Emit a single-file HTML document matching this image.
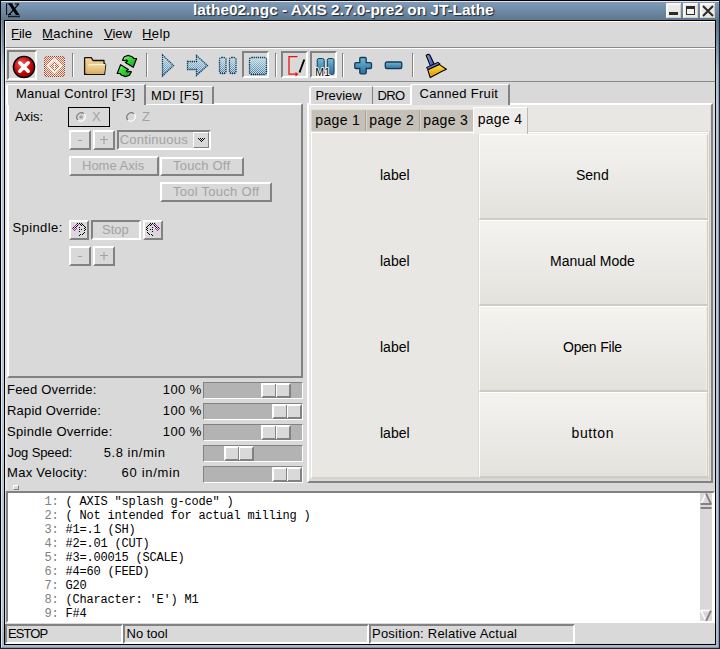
<!DOCTYPE html>
<html><head><meta charset="utf-8">
<style>
*{box-sizing:border-box;margin:0;padding:0}
html,body{width:720px;height:649px;overflow:hidden;background:#000}
body{position:relative;font-family:"Liberation Sans",sans-serif;font-size:13px;color:#000}
.a{position:absolute}
.t{position:absolute;white-space:pre;line-height:1}
.r2{border:2px solid;border-color:#fff #828282 #828282 #fff;background:#d9d9d9}
.s2{border:2px solid;border-color:#828282 #fff #fff #828282;background:#d9d9d9}
.s1{border:1px solid;border-color:#828282 #fff #fff #828282}
.dis{color:#a3a3a3}
.u{text-decoration:underline}
.gt{font-size:14px;color:#000}
.gbtn{background:linear-gradient(#f4f3f0,#e4e2dd);border-left:1px solid #fff;border-top:1px solid #fff;border-right:1px solid #cfcbc1;border-bottom:2px solid #cfccc4;box-shadow:-1px 0 0 #dddbd5,inset -1px 0 0 #f0efec}
.sep{width:2px;border-left:1px solid #828282;border-right:1px solid #fff;border-top:1px solid #828282}
.trough{border:1px solid;border-color:#828282 #fff #fff #828282;background:#b3b3b3;width:100px;height:17px}
.slider{width:30px;height:15px;top:0px;border:2px solid;border-color:#fff #828282 #828282 #fff;background:#d9d9d9}
.slider i{position:absolute;left:12px;top:-1px;width:2px;height:13px;border-left:1px solid #828282;border-right:1px solid #fff}
</style></head><body>
<!-- window frame -->
<div class="a" style="left:1px;top:1px;width:718px;height:647px;background:linear-gradient(#809cb8 0px,#5f7891 19px,#7890a8 40px,#aebfd0 70px,#b8c8d8 100px,#b8c8d8 600px,#aab9c9 647px);border-top:1px solid #dde8f4"></div>
<div class="a" style="left:1px;top:20px;width:1px;height:628px;background:linear-gradient(rgba(220,232,245,0.3),rgba(220,232,245,1) 80px)"></div>
<div class="a" style="left:718px;top:20px;width:1px;height:628px;background:rgba(60,80,100,0.35)"></div>
<div class="a" style="left:0px;top:647px;width:720px;height:1px;background:rgba(60,80,100,0.35)"></div>
<div class="a" style="left:2px;top:2px;width:717px;height:18px;background:linear-gradient(#7f9bb7,#5f7891)"></div>
<div class="a" style="left:4px;top:20px;width:712px;height:625px;background:#000"></div>
<div class="a" style="left:0;top:648px;width:720px;height:1px;background:#1a2530"></div>
<div class="a" style="left:719px;top:0;width:1px;height:649px;background:#1a2530"></div>
<!-- X logo -->
<svg class="a" style="left:0;top:0" width="24" height="20" viewBox="0 0 24 20">
 <rect x="6" y="3.3" width="1.1" height="11.6" fill="#111"/>
 <path d="M8.2 3.6L11.9 3.6L19.6 14.9L15.9 14.9Z" fill="#000"/>
 <path d="M18.6 4.1L9.2 14.6" stroke="#000" stroke-width="1.3"/>
 <rect x="14.8" y="3.4" width="4.4" height="1.1" fill="#000"/>
 <rect x="7.6" y="3.4" width="5" height="1" fill="#000"/>
 <rect x="7.8" y="14" width="3.4" height="1" fill="#000"/>
 <rect x="8" y="15.8" width="11.6" height="1.4" fill="#1a1a1a"/>
 <rect x="8" y="15.3" width="0.8" height="2.2" fill="#1a1a1a"/><rect x="18.8" y="15.3" width="0.8" height="2.2" fill="#1a1a1a"/>
</svg>
<!-- title -->
<div class="t" style="left:193px;top:3px;font-weight:bold;font-size:14px;color:#fff;text-shadow:1px 1px 1px #1b2631;transform:scaleX(1.1);transform-origin:0 0">lathe02.ngc - AXIS 2.7.0-pre2 on JT-Lathe</div>
<!-- title buttons -->
<div class="a" style="left:666px;top:3px;width:15px;height:15px;background:#ebe9e5;border:solid;border-width:2px 1px 1px 2px;border-color:#fbf8f2 #d6cebf #d6cebf #fbf8f2"><div class="a" style="left:1px;top:7px;width:9px;height:3px;background:#2b2b2b"></div></div>
<div class="a" style="left:683px;top:3px;width:15px;height:15px;background:#ebe9e5;border:solid;border-width:2px 1px 1px 2px;border-color:#fbf8f2 #d6cebf #d6cebf #fbf8f2"><div class="a" style="left:1px;top:1px;width:9px;height:9px;border:1px solid #2b2b2b;border-top-width:3px;background:#f4f2ee"></div></div>
<div class="a" style="left:700px;top:3px;width:15px;height:15px;background:#ebe9e5;border:solid;border-width:2px 1px 1px 2px;border-color:#fbf8f2 #d6cebf #d6cebf #fbf8f2"><svg class="a" style="left:0px;top:0px" width="12" height="12"><path d="M1 1L11 11M11 1L1 11" stroke="#2b2b2b" stroke-width="2"/></svg></div>
<!-- content -->
<div class="a" style="left:5px;top:21px;width:710px;height:623px;background:#d9d9d9"></div>
<!-- menubar -->
<div class="a" style="left:5px;top:21px;width:710px;height:27px;border-top:1px solid #fff;border-bottom:1px solid #8a8a8a;border-left:1px solid #fff"></div>
<div class="t" style="left:11px;top:27px">File</div><div class="a" style="left:12px;top:39px;width:8px;height:1px;background:#000"></div>
<div class="t" style="left:42px;top:27px;letter-spacing:0.3px">Machine</div><div class="a" style="left:43px;top:39px;width:11px;height:1px;background:#000"></div>
<div class="t" style="left:104px;top:27px">View</div><div class="a" style="left:104px;top:39px;width:9px;height:1px;background:#000"></div>
<div class="t" style="left:142px;top:27px;letter-spacing:0.4px">Help</div><div class="a" style="left:143px;top:39px;width:10px;height:1px;background:#000"></div>
<!-- toolbar -->
<div class="a" style="left:5px;top:48px;width:710px;height:34px;border-top:1px solid #fff;border-bottom:1px solid #8a8a8a;border-left:1px solid #fff"></div>
<div class="a s2" style="left:7px;top:50px;width:30px;height:30px"></div>
<svg class="a" style="left:0;top:0;width:0;height:0">
 <defs>
  <pattern id="chk" width="2" height="2" patternUnits="userSpaceOnUse"><rect x="1" y="0" width="1" height="1" fill="#d9d9d9"/><rect x="0" y="1" width="1" height="1" fill="#d9d9d9"/></pattern>
  <pattern id="chkw" width="2" height="2" patternUnits="userSpaceOnUse"><rect x="1" y="0" width="1" height="1" fill="#f4ecea"/><rect x="0" y="1" width="1" height="1" fill="#f4ecea"/></pattern>
  <linearGradient id="bg1" x1="0" y1="0" x2="0" y2="1"><stop offset="0" stop-color="#b6e4f2"/><stop offset="1" stop-color="#2f76a8"/></linearGradient>
  <linearGradient id="bg2" x1="0" y1="0" x2="0" y2="1"><stop offset="0" stop-color="#74b8d8"/><stop offset="1" stop-color="#2f6f98"/></linearGradient>
  <linearGradient id="gg2" x1="1" y1="1" x2="0" y2="0"><stop offset="0" stop-color="#c8ffc8"/><stop offset="0.35" stop-color="#3ee03e"/><stop offset="1" stop-color="#10a010"/></linearGradient>
  <linearGradient id="gg" x1="0" y1="0" x2="1" y2="1"><stop offset="0" stop-color="#c8ffc8"/><stop offset="0.35" stop-color="#3ee03e"/><stop offset="1" stop-color="#10a010"/></linearGradient>
  <linearGradient id="yg" x1="0" y1="0" x2="0" y2="1"><stop offset="0" stop-color="#ffe040"/><stop offset="1" stop-color="#e09000"/></linearGradient>
  <linearGradient id="hg" x1="0" y1="0" x2="1" y2="0"><stop offset="0" stop-color="#8aa8f0"/><stop offset="1" stop-color="#2a48a8"/></linearGradient>
  <linearGradient id="fg" x1="0" y1="0" x2="0" y2="1"><stop offset="0" stop-color="#f4d89a"/><stop offset="1" stop-color="#d6ac68"/></linearGradient>
 </defs>
</svg>
<svg class="a" style="left:12px;top:55px" width="24" height="24" viewBox="0 0 24 24">
 <defs><radialGradient id="rg" cx="0.4" cy="0.35" r="0.7"><stop offset="0" stop-color="#f46060"/><stop offset="0.55" stop-color="#cc0a0a"/><stop offset="1" stop-color="#880000"/></radialGradient></defs>
 <circle cx="12" cy="12" r="10.6" fill="url(#rg)" stroke="#000" stroke-width="1.4"/>
 <path d="M7.8 7.8L16.2 16.2M16.2 7.8L7.8 16.2" stroke="#fff" stroke-width="3.6" stroke-linecap="round"/>
</svg>
<svg class="a" style="left:44px;top:56px" width="22" height="21" viewBox="0 0 22 21">
 <rect x="0" y="0" width="21" height="21" rx="4" fill="#c9683e"/>
 <rect x="0.5" y="0.5" width="20" height="20" rx="3.5" fill="none" stroke="#8a3a30" stroke-width="1"/>
 <path d="M10.5 3.2L17.3 10L10.5 16.8L3.7 10Z" fill="none" stroke="#fbf4f2" stroke-width="2" stroke-linejoin="round"/>
 <path d="M10.5 7L10.5 13.5" stroke="#fbf4f2" stroke-width="1"/>
 <rect x="0" y="0" width="21" height="21" rx="4" fill="url(#chkw)"/>
</svg>
<div class="a sep" style="left:72px;top:53px;height:24px"></div>
<svg class="a" style="left:83px;top:56px" width="24" height="20" viewBox="0 0 24 20">
 <path d="M1.6 2L1.6 18.4L21.5 18.4L22.6 8.5L21 7.2L21 4.5L10 4.5L8.3 1.6L2 1.6Z" fill="url(#fg)" stroke="#111" stroke-width="1.3" stroke-linejoin="round"/>
 <path d="M4 18L5.2 9.6Q5.5 8.6 6.5 8.6L22.4 8.6L21.2 18Z" fill="url(#fg)"/>
 <path d="M5.3 9.4Q5.5 8.6 6.5 8.6L22.4 8.6" fill="none" stroke="#fff4dc" stroke-width="1"/>
</svg>
<svg class="a" style="left:114px;top:52px" width="26" height="28" viewBox="0 0 26 28">
 <path d="M8.4 8.2L10.3 4.7L14.2 3.4L18.1 4.7L20 6.5L22.6 6.5L19.2 15.3L11.4 10.6L13.6 9.1L12.5 8L10.3 8.6Z" fill="url(#gg)" stroke="#000" stroke-width="1.2" stroke-linejoin="round"/>
 <path d="M8.4 8.2L10.3 4.7L14.2 3.4L18.1 4.7L20 6.5L22.6 6.5L19.2 15.3L11.4 10.6L13.6 9.1L12.5 8L10.3 8.6Z" fill="url(#gg2)" stroke="#000" stroke-width="1.2" stroke-linejoin="round" transform="rotate(180 12.9 14)"/>
</svg>
<div class="a sep" style="left:146px;top:53px;height:24px"></div>
<svg class="a" style="left:160px;top:52px" width="80" height="26" viewBox="0 0 80 26">
 <g id="playg">
 <path d="M2.5 3L13.5 13.5L2.5 24Z" fill="url(#bg1)"/>
 <path d="M2.5 3L13.5 13.5L2.5 24Z" fill="url(#chk)"/>
 <path d="M2.5 3L13.5 13.5L2.5 24Z" fill="none" stroke="#0c3c62" stroke-width="1.3" stroke-dasharray="1.3 0.8"/>
 </g>
 <path d="M27.5 9.5L36.5 9.5L36.5 3.5L47.5 13.5L36.5 23.5L36.5 17.5L27.5 17.5Z" fill="url(#bg1)"/>
 <path d="M27.5 9.5L36.5 9.5L36.5 3.5L47.5 13.5L36.5 23.5L36.5 17.5L27.5 17.5Z" fill="url(#chk)"/>
 <path d="M27.5 9.5L36.5 9.5L36.5 3.5L47.5 13.5L36.5 23.5L36.5 17.5L27.5 17.5Z" fill="none" stroke="#0c3c62" stroke-width="1.3" stroke-dasharray="1.3 0.8"/>
 <rect x="59.5" y="5.5" width="6.5" height="16" rx="2" fill="url(#bg1)"/><rect x="59.5" y="5.5" width="6.5" height="16" rx="2" fill="url(#chk)"/>
 <rect x="59.5" y="5.5" width="6.5" height="16" rx="2" fill="none" stroke="#0c3c62" stroke-width="1.3" stroke-dasharray="1.3 0.8"/>
 <rect x="69.5" y="5.5" width="6.5" height="16" rx="2" fill="url(#bg1)"/><rect x="69.5" y="5.5" width="6.5" height="16" rx="2" fill="url(#chk)"/>
 <rect x="69.5" y="5.5" width="6.5" height="16" rx="2" fill="none" stroke="#0c3c62" stroke-width="1.3" stroke-dasharray="1.3 0.8"/>
</svg>
<div class="a s2" style="left:242px;top:51px;width:27px;height:27px"></div>
<svg class="a" style="left:248px;top:56px" width="20" height="20" viewBox="0 0 20 20">
 <rect x="1.5" y="1.5" width="17" height="17" rx="2" fill="url(#bg1)"/><rect x="1.5" y="1.5" width="17" height="17" rx="2" fill="url(#chk)"/>
 <rect x="1.5" y="1.5" width="17" height="17" rx="2" fill="none" stroke="#0c3c62" stroke-width="1.3" stroke-dasharray="1.3 0.8"/>
</svg>
<div class="a sep" style="left:275px;top:53px;height:24px"></div>
<div class="a s2" style="left:281px;top:51px;width:27px;height:27px"></div>
<svg class="a" style="left:285px;top:55px" width="22" height="22" viewBox="0 0 22 22">
 <path d="M4 1.6L12.5 1.6M4 1L4 19.2L11 19.2" fill="none" stroke="#ee1111" stroke-width="1.3"/>
 <path d="M10.5 16.8L13.5 19.2L10.5 21.6Z" fill="#ee1111"/>
 <path d="M19.3 4.5L14.5 17.5" stroke="#000" stroke-width="1.9"/>
</svg>
<div class="a s2" style="left:310px;top:51px;width:27px;height:27px"></div>
<svg class="a" style="left:314px;top:55px" width="22" height="23" viewBox="0 0 22 23">
 <rect x="3.2" y="3.5" width="7" height="16" rx="1.8" fill="url(#bg2)" stroke="#123e5e" stroke-width="1"/>
 <rect x="13.3" y="3.5" width="6.7" height="16" rx="1.8" fill="url(#bg2)" stroke="#123e5e" stroke-width="1"/>
 <text x="1.2" y="20.8" font-family="Liberation Sans" font-size="10.5" fill="#000" stroke="#fff" stroke-width="1.6" paint-order="stroke" letter-spacing="0.3">M1</text>
</svg>
<div class="a sep" style="left:342px;top:53px;height:24px"></div>
<svg class="a" style="left:354px;top:56px" width="50" height="19" viewBox="0 0 50 19">
 <path d="M7 1.5L11 1.5Q12.2 1.5 12.2 2.7L12.2 6.6L16.3 6.6Q17.5 6.6 17.5 7.8L17.5 11.3Q17.5 12.5 16.3 12.5L12.2 12.5L12.2 16.6Q12.2 17.8 11 17.8L7 17.8Q5.8 17.8 5.8 16.6L5.8 12.5L2 12.5Q0.8 12.5 0.8 11.3L0.8 7.8Q0.8 6.6 2 6.6L5.8 6.6L5.8 2.7Q5.8 1.5 7 1.5Z" fill="url(#bg2)" stroke="#0f3a5a" stroke-width="1.3"/>
 <rect x="31.3" y="6" width="16.5" height="6.6" rx="1.6" fill="url(#bg2)" stroke="#0f3a5a" stroke-width="1.3"/>
</svg>
<div class="a sep" style="left:412px;top:53px;height:24px"></div>
<svg class="a" style="left:424px;top:52px" width="24" height="27" viewBox="0 0 24 27">
 <path d="M2.2 3.5Q3.8 1.6 5.8 3L10.3 12.3L6.6 14.4Z" fill="url(#hg)" stroke="#000" stroke-width="1.1" stroke-linejoin="round"/>
 <path d="M2.5 15.5L14 10.3L16.2 12L4 17.8Z" fill="#5a78d0" stroke="#000" stroke-width="1" stroke-linejoin="round"/>
 <path d="M3.8 17.8L15.5 12.6L22.4 17.3L17.5 19.5L12 22.5L6.2 25.6Z" fill="url(#yg)" stroke="#000" stroke-width="1.1" stroke-linejoin="round"/>
</svg>

<!-- left notebook -->
<div class="a" style="left:5px;top:83px;width:2px;height:408px;background:#e6e6e6"></div>
<div class="a r2" style="left:7px;top:103px;width:296px;height:275px"></div>
<div class="a" style="left:146px;top:86px;width:68px;height:18px;background:#d9d9d9;border-top:1px solid #fff;border-right:2px solid #828282"></div>
<div class="t" style="left:151px;top:89px;letter-spacing:0.33px">MDI [F5]</div>
<div class="a" style="left:6px;top:84px;width:140px;height:21px;background:#d9d9d9;border-top:1px solid #fff;border-left:2px solid #fff;border-right:2px solid #828282;border-top-left-radius:3px"></div>
<div class="t" style="left:16px;top:87px;letter-spacing:0.27px">Manual Control [F3]</div>

<div class="t" style="left:15px;top:110px">Axis:</div>
<div class="a" style="left:68px;top:107px;width:42px;height:20px;border:1px solid #000"></div>
<svg class="a" style="left:75px;top:111px" width="12" height="12" viewBox="0 0 12 12"><path d="M2.9 9.1A4.4 4.4 0 0 1 9.1 2.9" stroke="#7a7a7a" stroke-width="1.2" fill="none"/><path d="M9.1 2.9A4.4 4.4 0 0 1 2.9 9.1" stroke="#fff" stroke-width="1.2" fill="none"/><circle cx="6" cy="6" r="1.8" fill="#a3a3a3"/></svg>
<div class="t dis" style="left:92px;top:110px">X</div>
<svg class="a" style="left:125px;top:111px" width="12" height="12" viewBox="0 0 12 12"><path d="M2.9 9.1A4.4 4.4 0 0 1 9.1 2.9" stroke="#7a7a7a" stroke-width="1.2" fill="none"/><path d="M9.1 2.9A4.4 4.4 0 0 1 2.9 9.1" stroke="#fff" stroke-width="1.2" fill="none"/></svg>
<div class="t dis" style="left:142px;top:110px">Z</div>

<div class="a r2" style="left:69px;top:130px;width:22px;height:20px"></div><div class="a" style="left:78px;top:140px;width:4px;height:1px;background:#a3a3a3"></div>
<div class="a r2" style="left:93px;top:130px;width:22px;height:20px"></div><div class="a" style="left:100px;top:139px;width:8px;height:1px;background:#a3a3a3"></div><div class="a" style="left:103px;top:136px;width:2px;height:8px;background:#b8b8b8"></div><div class="a" style="left:100px;top:139px;width:8px;height:1px;background:#a3a3a3"></div>
<div class="a s2" style="left:117px;top:130px;width:94px;height:20px"></div>
<div class="t dis" style="left:119.7px;top:133px;letter-spacing:0.25px">Continuous</div>
<div class="a" style="left:193px;top:132px;width:16px;height:16px;background:#d9d9d9;border:solid;border-width:1px;border-color:#fff #828282 #828282 #fff"></div>
<svg class="a" style="left:196px;top:136px" width="10" height="8" shape-rendering="crispEdges"><rect x="2" y="2" width="1" height="1" fill="#000"/><rect x="4" y="2" width="1" height="1" fill="#000"/><rect x="6" y="2" width="1" height="1" fill="#000"/><rect x="8" y="2" width="1" height="1" fill="#000"/><rect x="3" y="3" width="1" height="1" fill="#000"/><rect x="5" y="3" width="1" height="1" fill="#000"/><rect x="7" y="3" width="1" height="1" fill="#000"/><rect x="4" y="4" width="1" height="1" fill="#000"/><rect x="6" y="4" width="1" height="1" fill="#000"/><rect x="5" y="5" width="1" height="1" fill="#000"/></svg>

<div class="a r2" style="left:69px;top:156px;width:90px;height:20px"></div><div class="t dis" style="left:82px;top:159px">Home Axis</div>
<div class="a r2" style="left:160px;top:157px;width:84px;height:19px"></div><div class="t dis" style="left:173px;top:159px;letter-spacing:0.2px">Touch Off</div>
<div class="a r2" style="left:160px;top:182px;width:112px;height:20px"></div><div class="t dis" style="left:173px;top:185px;letter-spacing:0.27px">Tool Touch Off</div>

<div class="t" style="left:12.5px;top:221px;letter-spacing:0.4px">Spindle:</div>
<div class="a r2" style="left:69px;top:220px;width:20px;height:20px"></div>
<svg class="a" style="left:71px;top:221px" width="16" height="16" viewBox="0 0 16 16" shape-rendering="crispEdges"><rect x="6" y="2" width="1" height="1" fill="#000"/><rect x="8" y="2" width="1" height="1" fill="#000"/><rect x="10" y="2" width="1" height="1" fill="#000"/><rect x="9" y="3" width="1" height="1" fill="#000"/><rect x="11" y="3" width="1" height="1" fill="#000"/><rect x="6" y="4" width="1" height="1" fill="#000"/><rect x="10" y="4" width="1" height="1" fill="#000"/><rect x="12" y="4" width="1" height="1" fill="#000"/><rect x="5" y="5" width="1" height="1" fill="#000"/><rect x="13" y="5" width="1" height="1" fill="#000"/><rect x="2" y="6" width="1" height="1" fill="#000"/><rect x="4" y="6" width="1" height="1" fill="#000"/><rect x="8" y="6" width="1" height="1" fill="#000"/><rect x="14" y="6" width="1" height="1" fill="#000"/><rect x="13" y="7" width="1" height="1" fill="#000"/><rect x="8" y="8" width="1" height="1" fill="#000"/><rect x="10" y="8" width="1" height="1" fill="#000"/><rect x="14" y="8" width="1" height="1" fill="#000"/><rect x="13" y="9" width="1" height="1" fill="#000"/><rect x="8" y="10" width="1" height="1" fill="#000"/><rect x="13" y="11" width="1" height="1" fill="#000"/><rect x="12" y="12" width="1" height="1" fill="#000"/><rect x="11" y="13" width="1" height="1" fill="#000"/><rect x="9" y="13" width="1" height="1" fill="#000"/><rect x="8" y="14" width="1" height="1" fill="#000"/><rect x="5" y="3" width="1" height="1" fill="#b020b0"/><rect x="7" y="3" width="1" height="1" fill="#b020b0"/><rect x="4" y="4" width="1" height="1" fill="#b020b0"/><rect x="3" y="5" width="1" height="1" fill="#b020b0"/><rect x="1" y="7" width="1" height="1" fill="#b020b0"/><rect x="3" y="7" width="1" height="1" fill="#b020b0"/><rect x="5" y="7" width="1" height="1" fill="#b020b0"/><rect x="2" y="8" width="1" height="1" fill="#b020b0"/><rect x="4" y="8" width="1" height="1" fill="#b020b0"/><rect x="3" y="9" width="1" height="1" fill="#b020b0"/></svg>
<div class="a s2" style="left:91px;top:220px;width:50px;height:20px"></div><div class="t dis" style="left:102px;top:223px">Stop</div>
<div class="a r2" style="left:143px;top:220px;width:20px;height:20px"></div>
<svg class="a" style="left:145px;top:221px" width="16" height="16" viewBox="0 0 16 16" shape-rendering="crispEdges"><rect x="9" y="2" width="1" height="1" fill="#000"/><rect x="7" y="2" width="1" height="1" fill="#000"/><rect x="5" y="2" width="1" height="1" fill="#000"/><rect x="6" y="3" width="1" height="1" fill="#000"/><rect x="4" y="3" width="1" height="1" fill="#000"/><rect x="9" y="4" width="1" height="1" fill="#000"/><rect x="5" y="4" width="1" height="1" fill="#000"/><rect x="3" y="4" width="1" height="1" fill="#000"/><rect x="10" y="5" width="1" height="1" fill="#000"/><rect x="2" y="5" width="1" height="1" fill="#000"/><rect x="13" y="6" width="1" height="1" fill="#000"/><rect x="11" y="6" width="1" height="1" fill="#000"/><rect x="7" y="6" width="1" height="1" fill="#000"/><rect x="1" y="6" width="1" height="1" fill="#000"/><rect x="2" y="7" width="1" height="1" fill="#000"/><rect x="7" y="8" width="1" height="1" fill="#000"/><rect x="5" y="8" width="1" height="1" fill="#000"/><rect x="1" y="8" width="1" height="1" fill="#000"/><rect x="2" y="9" width="1" height="1" fill="#000"/><rect x="7" y="10" width="1" height="1" fill="#000"/><rect x="2" y="11" width="1" height="1" fill="#000"/><rect x="3" y="12" width="1" height="1" fill="#000"/><rect x="4" y="13" width="1" height="1" fill="#000"/><rect x="6" y="13" width="1" height="1" fill="#000"/><rect x="7" y="14" width="1" height="1" fill="#000"/><rect x="10" y="3" width="1" height="1" fill="#b020b0"/><rect x="8" y="3" width="1" height="1" fill="#b020b0"/><rect x="11" y="4" width="1" height="1" fill="#b020b0"/><rect x="12" y="5" width="1" height="1" fill="#b020b0"/><rect x="14" y="7" width="1" height="1" fill="#b020b0"/><rect x="12" y="7" width="1" height="1" fill="#b020b0"/><rect x="10" y="7" width="1" height="1" fill="#b020b0"/><rect x="13" y="8" width="1" height="1" fill="#b020b0"/><rect x="11" y="8" width="1" height="1" fill="#b020b0"/><rect x="12" y="9" width="1" height="1" fill="#b020b0"/></svg>
<div class="a r2" style="left:69px;top:246px;width:22px;height:20px"></div><div class="a" style="left:78px;top:256px;width:4px;height:1px;background:#a3a3a3"></div>
<div class="a r2" style="left:93px;top:246px;width:22px;height:20px"></div><div class="a" style="left:100px;top:255px;width:8px;height:1px;background:#a3a3a3"></div><div class="a" style="left:103px;top:252px;width:2px;height:8px;background:#b8b8b8"></div><div class="a" style="left:100px;top:255px;width:8px;height:1px;background:#a3a3a3"></div>

<!-- overrides -->
<div class="t" style="left:7px;top:383px;letter-spacing:0.2px">Feed Override:</div>
<div class="t" style="left:7px;top:404px;letter-spacing:0.2px">Rapid Override:</div>
<div class="t" style="left:7px;top:425px;letter-spacing:0.3px">Spindle Override:</div>
<div class="t" style="left:7.5px;top:446px;letter-spacing:-0.1px">Jog Speed:</div>
<div class="t" style="left:7px;top:466px;letter-spacing:0.3px">Max Velocity:</div>
<div class="t" style="left:162.8px;top:383px;letter-spacing:0.4px">100 %</div>
<div class="t" style="left:162.8px;top:404px;letter-spacing:0.4px">100 %</div>
<div class="t" style="left:162.8px;top:425px;letter-spacing:0.4px">100 %</div>
<div class="t" style="left:103.7px;top:446px;letter-spacing:0.55px">5.8 in/min</div>
<div class="t" style="left:121.5px;top:466px;letter-spacing:0.7px">60 in/min</div>
<div class="a trough" style="left:203px;top:382px"><div class="a slider" style="left:57px"><i></i></div></div>
<div class="a trough" style="left:203px;top:403px"><div class="a slider" style="left:68px"><i></i></div></div>
<div class="a trough" style="left:203px;top:424px"><div class="a slider" style="left:57px"><i></i></div></div>
<div class="a trough" style="left:203px;top:445px"><div class="a slider" style="left:20px"><i></i></div></div>
<div class="a trough" style="left:203px;top:466px"><div class="a slider" style="left:68px"><i></i></div></div>
<div class="a r2" style="left:13px;top:485px;width:6px;height:5px;border-width:1px"></div>

<!-- right notebook -->
<div class="a r2" style="left:307px;top:103px;width:406px;height:380px"></div>
<div class="a" style="left:309px;top:86px;width:64px;height:18px;background:#d9d9d9;border-top:1px solid #fff;border-left:2px solid #fff;border-right:1px solid #828282;border-top-left-radius:3px"></div>
<div class="t" style="left:315.5px;top:89px">Preview</div>
<div class="a" style="left:373px;top:86px;width:38px;height:18px;background:#d9d9d9;border-top:1px solid #fff;border-right:1px solid #828282"></div>
<div class="t" style="left:377.5px;top:89px;letter-spacing:-0.7px">DRO</div>
<div class="a" style="left:410px;top:84px;width:100px;height:21px;background:#d9d9d9;border-top:1px solid #fff;border-left:2px solid #fff;border-right:2px solid #828282;border-top-left-radius:3px"></div>
<div class="t" style="left:419.5px;top:87px;letter-spacing:0.3px">Canned Fruit</div>

<!-- gtk area -->
<div class="a" style="left:309px;top:105px;width:402px;height:376px;background:#e8e7e3;border-bottom:2px solid #d9d9d9;border-right:1px solid #dcdcdc"></div>
<div class="a" style="left:311px;top:131px;width:399px;height:348px;background:#e8e7e3;border-top:1px solid #dcdad4;border-left:1px solid #fff;border-right:1px solid #cfcbbf;border-bottom:2px solid #d6d2c9;box-shadow:inset 0 1px 0 #fff,inset -1px 0 0 #eeede9"></div>
<div class="a" style="left:311px;top:109px;width:162px;height:22px;background:#c5c1b8;border-top:1px solid #e2dfd8;border-left:1px solid #d9d5cc"></div>
<div class="a" style="left:365px;top:110px;width:1px;height:21px;background:#a9a599"></div><div class="a" style="left:366px;top:110px;width:1px;height:21px;background:#d6d3cb"></div>
<div class="a" style="left:419px;top:110px;width:1px;height:21px;background:#a9a599"></div><div class="a" style="left:420px;top:110px;width:1px;height:21px;background:#d6d3cb"></div>
<div class="t gt" style="left:315.3px;top:113px;letter-spacing:0.35px">page 1</div>
<div class="t gt" style="left:369.3px;top:113px;letter-spacing:0.35px">page 2</div>
<div class="t gt" style="left:423.3px;top:113px;letter-spacing:0.35px">page 3</div>
<div class="a" style="left:473px;top:107px;width:55px;height:27px;background:#eeede9;border-left:1px solid #fff;border-top:1px solid #fff;border-right:1px solid #bdb9ae"></div>
<div class="t gt" style="left:477.7px;top:112px;letter-spacing:0.3px">page 4</div>

<div class="a gbtn" style="left:479px;top:134px;width:229px;height:86px"></div>
<div class="a gbtn" style="left:479px;top:220px;width:229px;height:86px"></div>
<div class="a gbtn" style="left:479px;top:306px;width:229px;height:86px"></div>
<div class="a gbtn" style="left:479px;top:392px;width:229px;height:86px"></div>
<div class="t gt" style="left:380px;top:168px">label</div>
<div class="t gt" style="left:380px;top:254px">label</div>
<div class="t gt" style="left:380px;top:340px">label</div>
<div class="t gt" style="left:380px;top:426px">label</div>
<div class="t gt" style="left:576px;top:168px">Send</div>
<div class="t gt" style="left:550px;top:254px">Manual Mode</div>
<div class="t gt" style="left:563px;top:340px;letter-spacing:-0.2px">Open File</div>
<div class="t gt" style="left:571.5px;top:426px;letter-spacing:0.6px">button</div>

<!-- text widget -->
<div class="a" style="left:6px;top:491px;width:709px;height:132px;background:#fff;border:2px solid;border-color:#828282 #fff #fff #828282"></div>
<div class="a" style="left:9.5px;top:495px;font-family:'Liberation Mono',monospace;font-size:12px;letter-spacing:-0.2px;line-height:14px;white-space:pre;color:#000"><span style="color:#808080">     1: </span>( AXIS "splash g-code" )
<span style="color:#808080">     2: </span>( Not intended for actual milling )
<span style="color:#808080">     3: </span>#1=.1 (SH)
<span style="color:#808080">     4: </span>#2=.01 (CUT)
<span style="color:#808080">     5: </span>#3=.00015 (SCALE)
<span style="color:#808080">     6: </span>#4=60 (FEED)
<span style="color:#808080">     7: </span>G20
<span style="color:#808080">     8: </span>(Character: 'E') M1
<span style="color:#808080">     9: </span>F#4</div>
<div class="a" style="left:700px;top:493px;width:12px;height:128px;background:#d9d9d9"></div>
<svg class="a" style="left:700px;top:493px" width="12" height="130" viewBox="0 0 12 130">
 <path d="M6 0.5L0.8 11.5" stroke="#fff" stroke-width="1.5"/>
 <path d="M6 0.5L11 11" stroke="#828282" stroke-width="1.8"/>
 <path d="M0.5 11L11.5 11" stroke="#828282" stroke-width="2"/>
 <path d="M0.5 15L11.5 15" stroke="#828282" stroke-width="2"/>
 <path d="M0.5 117.5L11.5 117.5" stroke="#fff" stroke-width="1.5"/>
 <path d="M1 117.5L6 128" stroke="#fff" stroke-width="1.5"/>
 <path d="M11 117.5L6 128" stroke="#828282" stroke-width="1.8"/>
</svg>

<!-- status bar -->
<div class="a s2" style="left:5px;top:624px;width:118px;height:20px"></div>
<div class="t" style="left:8px;top:627px;letter-spacing:-0.9px">ESTOP</div>
<div class="a s2" style="left:123px;top:624px;width:246px;height:20px"></div>
<div class="t" style="left:126.5px;top:627px">No tool</div>
<div class="a s2" style="left:369px;top:624px;width:206px;height:20px"></div>
<div class="t" style="left:372px;top:627px;letter-spacing:0.23px">Position: Relative Actual</div>
</body></html>
